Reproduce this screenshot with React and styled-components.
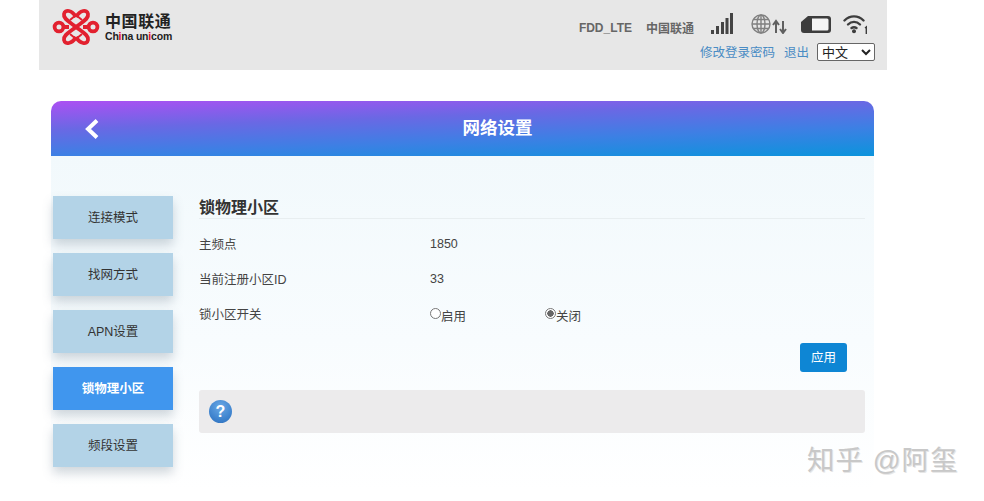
import React from 'react';
import styled, { createGlobalStyle } from 'styled-components';

const GlobalStyle = createGlobalStyle`
  html, body {
    margin: 0;
    padding: 0;
    background: #fff;
    font-family: "Liberation Sans", Arial, "Noto Sans CJK SC", sans-serif;
    color: #333;
  }
`;

const Page = styled.div`
  position: relative;
  width: 984px;
  height: 501px;
  overflow: hidden;
`;

const TopBar = styled.header`
  margin-left: 39px;
  width: 848px;
  height: 70px;
  box-sizing: border-box;
  background: #e7e7e7;
  padding: 0 12px 0 13px;
  display: flex;
  justify-content: space-between;
`;

const Logo = styled.div`
  display: flex;
  align-items: center;
  gap: 5px;
  height: 54px;
`;

const LogoText = styled.div`
  display: flex;
  flex-direction: column;
  color: #222;
`;

const LogoCn = styled.span`
  font-size: 16px;
  line-height: 18px;
  font-weight: 700;
  letter-spacing: 0.6px;
`;

const LogoEn = styled.span`
  font-size: 10.5px;
  line-height: 11px;
  font-weight: 700;
  letter-spacing: -0.2px;
  i {
    font-style: normal;
    color: #e60027;
  }
`;

const TopRight = styled.div`
  display: flex;
  flex-direction: column;
  align-items: flex-end;
`;

const StatusRow = styled.div`
  display: flex;
  align-items: center;
  height: 42px;
  padding: 6px 7px 0 0;
  box-sizing: border-box;
`;

const StatusText = styled.span`
  font-size: 12px;
  font-weight: 700;
  color: #666;
  margin: 7px ${(p) => p.$gap}px 0 0;
`;

const StatusIcon = styled.svg`
  display: block;
  margin-right: ${(p) => p.$gap || 0}px;
`;

const LinkRow = styled.div`
  display: flex;
  align-items: center;
  font-size: 12.5px;
  color: #4a8cc4;
`;

const TopLink = styled.a`
  margin-right: ${(p) => p.$gap}px;
  cursor: pointer;
`;

const LangSelect = styled.select`
  width: 58px;
  height: 18px;
  box-sizing: border-box;
  padding: 0;
  font-size: 13px;
  font-family: inherit;
  background: #fff;
  color: #222;
  border: 1px solid #666;
  border-radius: 2px;
`;

const Card = styled.main`
  margin: 31px 0 0 51px;
  width: 823px;
`;

const CardHead = styled.div`
  height: 55px;
  border-radius: 10px 10px 0 0;
  background: linear-gradient(178deg, #ac50f3 0%, #6a68e4 34%, #3c80e4 66%, #0b94dc 100%);
  display: flex;
  align-items: center;
  position: relative;
  justify-content: center;
`;

const BackButton = styled.svg`
  position: absolute;
  left: 33px;
  top: 17px;
`;

const CardTitle = styled.h1`
  margin: 0 0 5px 70px;
  font-size: 17.5px;
  font-weight: 700;
  color: #fff;
`;

const CardBody = styled.div`
  height: 335px;
  box-sizing: border-box;
  padding: 40px 9px 0 2px;
  background: linear-gradient(180deg, #f2f9fc 0%, #f8fcfe 55%, #ffffff 100%);
  display: flex;
  gap: 26px;
`;

const SideNav = styled.nav`
  width: 120px;
  flex: none;
  display: flex;
  flex-direction: column;
  gap: 14px;
`;

const NavItem = styled.div`
  height: 43px;
  box-sizing: border-box;
  padding-bottom: 2px;
  display: flex;
  align-items: center;
  justify-content: center;
  font-size: 12.5px;
  font-weight: ${(p) => (p.$active ? 700 : 400)};
  color: ${(p) => (p.$active ? '#fff' : '#333')};
  background: ${(p) => (p.$active ? '#4096ee' : '#b3d3e7')};
  box-shadow: 0 6px 10px rgba(90, 110, 130, 0.28);
`;

const Content = styled.section`
  flex: 1;
  min-width: 0;
`;

const SectionTitle = styled.h2`
  margin: 0;
  height: 22px;
  line-height: 24px;
  font-size: 16px;
  font-weight: 700;
  color: #333;
  border-bottom: 1px solid #e8eef0;
`;

const Rows = styled.div`
  margin-top: 8px;
  display: flex;
  flex-direction: column;
`;

const Row = styled.div`
  display: flex;
  align-items: center;
  height: 35px;
  box-sizing: border-box;
  padding-bottom: 2px;
  font-size: 12.5px;
  color: #444;
`;

const RowLabel = styled.span`
  width: 231px;
  flex: none;
`;

const RadioLabel = styled.label`
  width: 115px;
  display: flex;
  align-items: center;
  padding-top: 3px;
`;

const RadioDot = styled.span`
  width: 11px;
  height: 11px;
  box-sizing: border-box;
  border-radius: 50%;
  border: 1px solid #777;
  margin-top: -3px;
  background: ${(p) => (p.$on ? 'radial-gradient(circle, #666 0 3px, #fff 3.4px)' : '#fff')};
`;

const ButtonRow = styled.div`
  display: flex;
  justify-content: flex-end;
  padding-right: 18px;
  margin-top: 11px;
`;

const ApplyButton = styled.button`
  width: 47px;
  height: 29px;
  padding: 0 0 2px;
  border: none;
  border-radius: 3px;
  background: #0e86d4;
  color: #fff;
  font-size: 12.5px;
  font-family: inherit;
`;

const HelpBar = styled.div`
  margin-top: 18px;
  height: 43px;
  background: #ecebec;
  border-radius: 3px;
  display: flex;
  align-items: center;
  padding-left: 10px;
`;

const HelpIcon = styled.div`
  width: 23px;
  height: 23px;
  border-radius: 50%;
  background: radial-gradient(circle at 50% 30%, #6aa9e6 0%, #3a7fcb 70%, #2f6db5 100%);
  color: #fff;
  font-size: 16px;
  font-weight: 700;
  display: flex;
  align-items: center;
  justify-content: center;
`;

const Watermark = styled.div`
  position: absolute;
  left: 807px;
  top: 444px;
  font-size: 27.5px;
  line-height: 34px;
  color: #c8c8c8;
  letter-spacing: 1px;
  white-space: nowrap;
  text-shadow: 1px 1px 0 #e6e6e6;
`;

const navItems = ['连接模式', '找网方式', 'APN设置', '锁物理小区', '频段设置'];

function UnicomLogo() {
  // 红色中国结
  return (
    <svg width="48" height="38" viewBox="0 0 48 38" fill="none" stroke="#e2212f" strokeWidth="3.8">
      <circle cx="7" cy="19" r="4.4" />
      <circle cx="41" cy="19" r="4.4" />
      <path d="M24 9 C20 2 13 1 12 6 C11 11 18 14 24 19 C30 24 37 27 36 32 C35 37 28 36 24 29" />
      <path d="M24 9 C28 2 35 1 36 6 C37 11 30 14 24 19 C18 24 11 27 12 32 C13 37 20 36 24 29" />
      <path d="M11 19 H17 M31 19 H37" />
      <path d="M18 12 L24 7 L30 12 M18 26 L24 31 L30 26" strokeWidth="2" />
    </svg>
  );
}

export default function App() {
  return (
    <Page>
      <GlobalStyle />
      <TopBar>
        <Logo>
          <UnicomLogo />
          <LogoText>
            <LogoCn>中国联通</LogoCn>
            <LogoEn>Ch<i>i</i>na un<i>i</i>com</LogoEn>
          </LogoText>
        </Logo>
        <TopRight>
          <StatusRow>
            <StatusText $gap={14}>FDD_LTE</StatusText>
            <StatusText $gap={17}>中国联通</StatusText>
            <StatusIcon $gap={18} width="22" height="22" viewBox="0 0 22 22" fill="#444">
              <rect x="0" y="17" width="3" height="4" />
              <rect x="5" y="13" width="3" height="8" />
              <rect x="10" y="9" width="3" height="12" />
              <rect x="14.5" y="5" width="3" height="16" />
              <rect x="19" y="0" width="3" height="21" />
            </StatusIcon>
            <StatusIcon $gap={14} width="36" height="20" viewBox="0 0 36 20" fill="none">
              <g stroke="#808080" strokeWidth="1.4">
                <circle cx="10" cy="10" r="9" />
                <ellipse cx="10" cy="10" rx="4" ry="9" />
                <path d="M1 10 H19 M2.4 5.5 H17.6 M2.4 14.5 H17.6 M10 1 V19" />
              </g>
              <path d="M25 19 V8 M22 11 L25 7 L28 11 M32 7 V18 M29 15 L32 19 L35 15" stroke="#606060" strokeWidth="2" />
            </StatusIcon>
            <StatusIcon $gap={12} width="30" height="17" viewBox="0 0 30 17">
              <path d="M7 0 H27 Q30 0 30 3 V14 Q30 17 27 17 H3 Q0 17 0 14 V6 Z" fill="#3d3d3d" />
              <path d="M11 2.5 H26 Q27.5 2.5 27.5 4 V13 Q27.5 14.5 26 14.5 H11 Z" fill="#f4f4f4" />
            </StatusIcon>
            <StatusIcon width="25" height="20" viewBox="0 0 25 20" fill="none">
              <g stroke="#3d3d3d" strokeWidth="2.4" strokeLinecap="round">
                <path d="M1.5 6.5 C7 1 15 1 20.5 6.5" />
                <path d="M5 10.5 C8.5 7 13.5 7 17 10.5" />
                <path d="M8.5 14 C10 13 12 13 13.5 14" />
              </g>
              <circle cx="11" cy="17.3" r="2" fill="#3d3d3d" />
              <path d="M22 14 L23.3 13 V20" stroke="#3d3d3d" strokeWidth="1.4" />
            </StatusIcon>
          </StatusRow>
          <LinkRow>
            <TopLink $gap={9}>修改登录密码</TopLink>
            <TopLink $gap={8}>退出</TopLink>
            <LangSelect defaultValue="zh">
              <option value="zh">中文</option>
              <option value="en">English</option>
            </LangSelect>
          </LinkRow>
        </TopRight>
      </TopBar>

      <Card>
        <CardHead>
          <BackButton width="16" height="22" viewBox="0 0 16 22" fill="none">
            <path d="M13 2.5 L4 11 L13 19.5" stroke="#fff" strokeWidth="4" />
          </BackButton>
          <CardTitle>网络设置</CardTitle>
        </CardHead>
        <CardBody>
          <SideNav>
            {navItems.map((item) => (
              <NavItem key={item} $active={item === '锁物理小区'}>{item}</NavItem>
            ))}
          </SideNav>
          <Content>
            <SectionTitle>锁物理小区</SectionTitle>
            <Rows>
              <Row><RowLabel>主频点</RowLabel><span>1850</span></Row>
              <Row><RowLabel>当前注册小区ID</RowLabel><span>33</span></Row>
              <Row>
                <RowLabel>锁小区开关</RowLabel>
                <RadioLabel><RadioDot />启用</RadioLabel>
                <RadioLabel><RadioDot $on />关闭</RadioLabel>
              </Row>
            </Rows>
            <ButtonRow>
              <ApplyButton>应用</ApplyButton>
            </ButtonRow>
            <HelpBar>
              <HelpIcon>?</HelpIcon>
            </HelpBar>
          </Content>
        </CardBody>
      </Card>
      <Watermark>知乎 @阿玺</Watermark>
    </Page>
  );
}
